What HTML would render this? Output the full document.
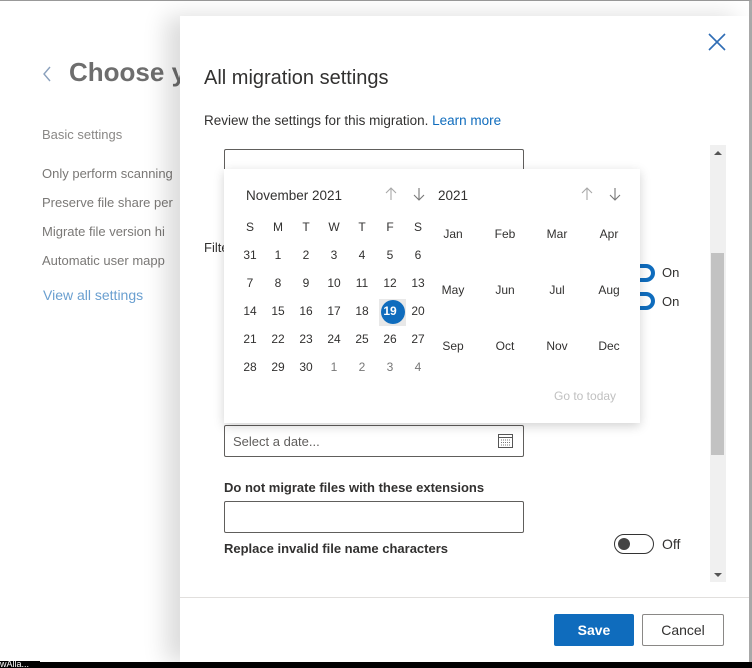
<!DOCTYPE html>
<html><head><style>
*{margin:0;padding:0;box-sizing:border-box}
body{width:752px;height:668px;overflow:hidden;background:#fff;font-family:"Liberation Sans",sans-serif;position:relative;color:#323130}
.a{position:absolute}
.frame{left:0;top:0;width:752px;height:668px;border-top:1px solid #999;border-right:3px solid #aaa}
.lt{color:#7a7876;font-size:13px}
.panel{left:180px;top:16px;width:569px;height:646px;background:#fff;box-shadow:-14px 0 22px rgba(0,0,0,.14)}
.dp{left:224px;top:169px;width:416px;height:254px;background:#fff;box-shadow:0 3px 10px rgba(0,0,0,.18);font-size:12px;color:#323130}
.g{position:absolute;width:28px;text-align:center}
.mo{position:absolute;width:52px;text-align:center}
.inp{border:1px solid #605e5c;border-radius:2px;background:#fff}
</style></head><body>
<div class="a frame"></div>
<div class="a" style="left:0;top:662px;width:752px;height:6px;background:#000"></div>
<div class="a" style="left:0;top:661px;color:#fff;font-size:9px;background:#000;width:40px;line-height:7px;overflow:hidden">wAlla...</div>
<svg class="a" style="left:42px;top:66px" width="10" height="16"><path d="M8 1L2 8l6 7" fill="none" stroke="#8aa0bc" stroke-width="1.4"/></svg>
<div class="a" style="left:69px;top:57px;font-size:26px;color:#6e6e6e;font-weight:bold">Choose y</div>
<div class="a lt" style="left:42px;top:127px;color:#8a8886">Basic settings</div>
<div class="a lt" style="left:42px;top:166px">Only perform scanning</div>
<div class="a lt" style="left:42px;top:195px">Preserve file share per</div>
<div class="a lt" style="left:42px;top:224px">Migrate file version hi</div>
<div class="a lt" style="left:42px;top:253px">Automatic user mapp</div>
<div class="a" style="left:43px;top:287px;font-size:14px;color:#6a9fd0">View all settings</div>

<div class="a panel"></div>
<svg class="a" style="left:707px;top:32px" width="20" height="20"><path d="M2 2L18 18M18 2L2 18" stroke="#2f6db5" stroke-width="1.6"/></svg>
<div class="a" style="left:204px;top:67px;font-size:20px;color:#323130">All migration settings</div>
<div class="a" style="left:204px;top:113px;font-size:13.5px">Review the settings for this migration. <span style="color:#0f6cbd">Learn more</span></div>
<div class="a inp" style="left:224px;top:149px;width:300px;height:30px"></div>
<div class="a" style="left:204px;top:240px;font-size:13px">Filte</div>
<div class="a" style="left:629px;top:264px;width:26px;height:18px;border:4px solid #0f6cbd;border-radius:10px"></div>
<div class="a" style="left:629px;top:292px;width:26px;height:18px;border:4px solid #0f6cbd;border-radius:10px"></div>
<div class="a" style="left:662px;top:265px;font-size:13px">On</div>
<div class="a" style="left:662px;top:294px;font-size:13px">On</div>
<div class="a" style="left:710px;top:145px;width:16px;height:437px;background:#f0f0f0"></div>
<div class="a" style="left:711px;top:253px;width:13px;height:202px;background:#c2c2c2"></div>
<div class="a" style="left:714px;top:151px;border:4px solid transparent;border-bottom:4px solid #555;border-top:0"></div>
<div class="a" style="left:714px;top:573px;border:4px solid transparent;border-top:4px solid #555;border-bottom:0"></div>

<div class="a inp" style="left:224px;top:425px;width:300px;height:32px"></div>
<div class="a" style="left:233px;top:434px;font-size:13px;color:#605e5c">Select a date...</div>
<svg class="a" style="left:497px;top:432px" width="17" height="17"><rect x="1.5" y="2.5" width="14" height="13" fill="none" stroke="#555"/><line x1="1.5" y1="5.5" x2="15.5" y2="5.5" stroke="#555"/><path d="M4 8h9M4 10.5h9M4 13h9" stroke="#777" stroke-dasharray="1 1"/></svg>
<div class="a" style="left:224px;top:480px;font-size:13px;font-weight:bold;color:#323130">Do not migrate files with these extensions</div>
<div class="a inp" style="left:224px;top:501px;width:300px;height:32px"></div>
<div class="a" style="left:224px;top:541px;font-size:13px;font-weight:bold">Replace invalid file name characters</div>
<div class="a" style="left:614px;top:534px;width:40px;height:20px;border:1px solid #333;border-radius:10px"></div>
<div class="a" style="left:618px;top:538px;width:12px;height:12px;border-radius:6px;background:#444"></div>
<div class="a" style="left:662px;top:536px;font-size:14px">Off</div>
<div class="a" style="left:180px;top:597px;width:569px;height:1px;background:#e1dfdd"></div>
<div class="a" style="left:554px;top:614px;width:80px;height:32px;background:#0f6cbd;border-radius:2px;color:#fff;font-weight:bold;font-size:14px;text-align:center;line-height:32px">Save</div>
<div class="a" style="left:642px;top:614px;width:82px;height:32px;border:1px solid #8a8886;border-radius:2px;font-size:14px;text-align:center;line-height:30px">Cancel</div>

<div class="a dp">
<div class="a" style="left:22px;top:19px;font-size:13.5px">November 2021</div>
<svg class="a" style="left:161px;top:18px" width="12" height="14"><path d="M6 13V1M1 6l5-5 5 5" fill="none" stroke="#a8a8a8" stroke-width="1.1"/></svg>
<svg class="a" style="left:189px;top:18px" width="12" height="14"><path d="M6 1v12M1 8l5 5 5-5" fill="none" stroke="#777" stroke-width="1.1"/></svg>
<div class="a" style="left:214px;top:19px;font-size:13.5px">2021</div>
<svg class="a" style="left:357px;top:18px" width="12" height="14"><path d="M6 13V1M1 6l5-5 5 5" fill="none" stroke="#a8a8a8" stroke-width="1.1"/></svg>
<svg class="a" style="left:385px;top:18px" width="12" height="14"><path d="M6 1v12M1 8l5 5 5-5" fill="none" stroke="#777" stroke-width="1.1"/></svg>
<div class="a" style="left:155px;top:130px;width:27px;height:27px;background:#e8e8e8"></div>
<div class="a" style="left:157px;top:131px;width:24px;height:24px;border-radius:12px;background:#0f6cbd"></div>
<div id="g"></div>
<div class="a" style="left:330px;top:220px;font-size:12px;color:#c0c0c0">Go to today</div>
</div>
<script>
var g=document.getElementById('g'),h='';
var H=['S','M','T','W','T','F','S'];
var rows=[[31,1,2,3,4,5,6],[7,8,9,10,11,12,13],[14,15,16,17,18,19,20],[21,22,23,24,25,26,27],[28,29,30,1,2,3,4]];
for(var i=0;i<7;i++)h+='<div class="g" style="left:'+(12+i*28)+'px;top:51px">'+H[i]+'</div>';
for(var r=0;r<5;r++)for(var i=0;i<7;i++){var d=rows[r][i];var s='';if(r==2&&i==5)s='color:#fff;font-weight:bold;';if((r==4&&i>2))s='color:#777;';h+='<div class="g" style="'+s+'left:'+(12+i*28)+'px;top:'+(79+r*28)+'px">'+d+'</div>';}
var M=['Jan','Feb','Mar','Apr','May','Jun','Jul','Aug','Sep','Oct','Nov','Dec'];
for(var k=0;k<12;k++)h+='<div class="mo" style="left:'+(203+(k%4)*52)+'px;top:'+(58+Math.floor(k/4)*56)+'px">'+M[k]+'</div>';
g.innerHTML=h;
</script>
</body></html>
